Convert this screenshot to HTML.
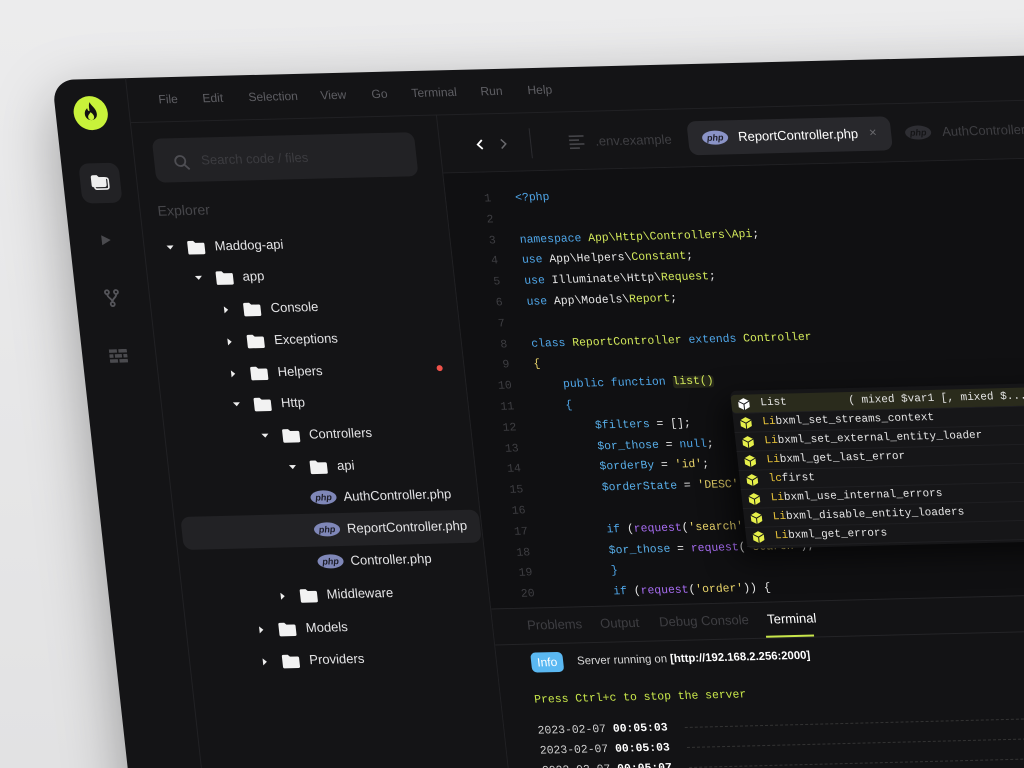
<!DOCTYPE html>
<html><head><meta charset="utf-8"><style>
*{margin:0;padding:0;box-sizing:border-box}
html,body{width:1024px;height:768px;overflow:hidden}
body{background:linear-gradient(180deg,#ececed 0%,#e2e2e3 100%);font-family:"Liberation Sans",sans-serif;position:relative}
.win{position:absolute;left:0;top:0;width:1150px;height:820px;background:#141416;border-radius:22px;transform-origin:0 0;transform:matrix(1,-0.025,0.11,1,52,80);box-shadow:0 20px 60px rgba(0,0,0,.35);overflow:hidden}
.a{position:absolute;white-space:nowrap}
.mono{font-family:"Liberation Mono",monospace}
.menu{font-size:12px;color:#5e5e63;top:15px}
.tree{font-size:13px;color:#e4e4e6;line-height:16px}
.code{font-family:"Liberation Mono",monospace;font-size:11.4px;line-height:20.8px;color:#e6e6e6;white-space:pre}
.ln{color:#3e3e42;text-align:right;width:30px;left:395px}
.k{color:#4fa6e8}.t{color:#d2e85a}.s{color:#e8d36a}.p{color:#a66cf0}.v{color:#58aee8}
.php{position:absolute;width:26px;height:14px;border-radius:50%;background:#7f87b8;color:#1b1b25;font:bold italic 9px/14px "Liberation Sans",sans-serif;text-align:center}
.row{position:absolute;left:0;right:0;height:19px;border-bottom:1px solid #1f1f22}
.row .ic{position:absolute;left:6px;top:3px}
.row .tx{position:absolute;left:29px;top:1px;font-family:"Liberation Mono",monospace;font-size:11px;line-height:17px;color:#e4e4e4;white-space:pre}
.y{color:#e8c43a}
</style></head><body>
<div class="win">
  <div class="a" style="left:73px;top:0;width:1px;height:820px;background:#212124"></div>
  <div class="a" style="left:74px;top:44px;width:1100px;height:1px;background:#212124"></div>
  <div class="a" style="left:18px;top:17px;width:34px;height:34px;border-radius:50%;background:#c8f23a"></div>
  <svg class="a" style="left:18px;top:17px" width="34" height="34" viewBox="0 0 34 34"><path d="M17 6c1 4 6 6 6 12a6 6 0 0 1-12 0c0-3 1.5-5 3-6 0 2 1 3 2 3 0-4-0.5-6 1-9z" fill="#111"/><path d="M17 16c2 2 3 3 3 5a3 3 0 0 1-6 0c0-2 1.5-3 3-5z" fill="#c8f23a"/></svg>
  <div class="a" style="left:17px;top:84px;width:40px;height:40px;border-radius:10px;background:#222225"></div>
  <svg class="a" style="left:26px;top:94px" width="22" height="20" viewBox="0 0 22 20"><rect x="5" y="5" width="14" height="11" rx="2" fill="none" stroke="#eee" stroke-width="1.6"/><path d="M2 4a2 2 0 0 1 2-2h4l2 2h5a2 2 0 0 1 2 2v6a2 2 0 0 1-2 2H4a2 2 0 0 1-2-2z" fill="#eee"/></svg>
  <svg class="a" style="left:30px;top:155px" width="12" height="12" viewBox="0 0 12 12"><path d="M2 1l9 5-9 5z" fill="#4a4a4e"/></svg>
  <svg class="a" style="left:28px;top:210px" width="16" height="18" viewBox="0 0 16 18"><g fill="none" stroke="#55555a" stroke-width="1.8"><circle cx="3.5" cy="3" r="2"/><circle cx="12.5" cy="3" r="2"/><circle cx="8" cy="15" r="2"/><path d="M3.5 5c0 4 4.5 4 4.5 8M12.5 5c0 4-4.5 4-4.5 8"/></g></svg>
  <svg class="a" style="left:27px;top:270px" width="18" height="14" viewBox="0 0 18 14"><g fill="#4a4a4e"><rect x="0" y="0" width="8" height="3.5"/><rect x="9.5" y="0" width="8.5" height="3.5"/><rect x="0" y="5" width="4" height="3.5"/><rect x="5.5" y="5" width="7" height="3.5"/><rect x="14" y="5" width="4" height="3.5"/><rect x="0" y="10" width="8" height="3.5"/><rect x="9.5" y="10" width="8.5" height="3.5"/></g></svg>
  <div class="a menu" style="left:104px">File</div>
  <div class="a menu" style="left:148px">Edit</div>
  <div class="a menu" style="left:194px">Selection</div>
  <div class="a menu" style="left:266px">View</div>
  <div class="a menu" style="left:317px">Go</div>
  <div class="a menu" style="left:357px">Terminal</div>
  <div class="a menu" style="left:426px">Run</div>
  <div class="a menu" style="left:473px">Help</div>
  <div class="a" style="left:379px;top:45px;width:1px;height:800px;background:#212124"></div>
  <div class="a" style="left:93px;top:61px;width:262px;height:44px;border-radius:9px;background:#222225"></div>
  <svg class="a" style="left:112px;top:77px" width="17" height="17" viewBox="0 0 17 17"><circle cx="7" cy="7" r="5" fill="none" stroke="#4e4e53" stroke-width="1.8"/><path d="M11 11l4.5 4.5" stroke="#4e4e53" stroke-width="1.8"/></svg>
  <div class="a" style="left:140px;top:76px;font-size:13px;color:#3c3c40">Search code / files</div>
  <div class="a" style="left:91px;top:125px;font-size:14px;color:#46464a">Explorer</div>
  <div class="a" style="left:80px;top:439px;width:298px;height:33px;border-radius:9px;background:#222225"></div>
  <div id="tree"></div>
  <div class="a" style="left:352px;top:294px;width:6px;height:6px;border-radius:50%;background:#f0524a"></div>
  <div class="a" style="left:380px;top:102px;width:800px;height:1px;background:#212124"></div>
  <svg class="a" style="left:415px;top:69px" width="10" height="12" viewBox="0 0 10 12"><path d="M7 1.5L2.5 6 7 10.5" fill="none" stroke="#fff" stroke-width="1.8"/></svg>
  <svg class="a" style="left:438px;top:69px" width="10" height="12" viewBox="0 0 10 12"><path d="M3 1.5L7.5 6 3 10.5" fill="none" stroke="#6a6a6e" stroke-width="1.5"/></svg>
  <div class="a" style="left:470px;top:60px;width:1px;height:30px;background:#2c2c30"></div>
  <svg class="a" style="left:509px;top:68px" width="15" height="14" viewBox="0 0 15 14"><g stroke="#444448" stroke-width="1.6"><path d="M0 1h15M0 5h10M0 9h15M0 13h10"/></g></svg>
  <div class="a" style="left:535px;top:67px;font-size:13px;color:#3e3e42">.env.example</div>
  <div class="a" style="left:628px;top:57px;width:203px;height:34px;border-radius:9px;background:#28282c"></div>
  <div class="php" style="left:642px;top:67px;background:#8a93c6">php</div>
  <div class="a" style="left:678px;top:66px;font-size:13px;color:#fff">ReportController.php</div>
  <div class="a" style="left:809px;top:65px;font-size:13px;color:#6a6a6e">×</div>
  <div class="php" style="left:845px;top:67px;background:#2e2e33;color:#141416">php</div>
  <div class="a" style="left:882px;top:66px;font-size:13px;color:#3e3e42">AuthController.php</div>
  <div class="a" style="left:380px;top:103px;width:800px;height:435px;background:#101012"></div>
  <div class="a code ln" style="top:120px">1
2
3
4
5
6
7
8
9
10
11
12
13
14
15
16
17
18
19
20</div>
  <div class="a code" style="left:449px;top:120px"><span class="k">&lt;?php</span>

<span class="k">namespace</span> <span class="t">App\Http\Controllers\Api</span>;
<span class="k">use</span> App\Helpers\<span class="t">Constant</span>;
<span class="k">use</span> Illuminate\Http\<span class="t">Request</span>;
<span class="k">use</span> App\Models\<span class="t">Report</span>;

<span class="k">class</span> <span class="t">ReportController</span> <span class="k">extends</span> <span class="t">Controller</span>
<span class="s">{</span>
    <span class="k">public function</span> <span class="t" style="background:#26271a;border-radius:3px">list()</span>
    <span class="k">{</span>
        <span class="v">$filters</span> = [];
        <span class="v">$or_those</span> = <span class="k">null</span>;
        <span class="v">$orderBy</span> = <span class="s">'id'</span>;
        <span class="v">$orderState</span> = <span class="s">'DESC'</span>;

        <span class="k">if</span> (<span class="p">request</span>(<span class="s">'search'</span>)) {
        <span class="v">$or_those</span> = <span class="p">request</span>(<span class="s">'search'</span>);
        <span class="k">}</span>
        <span class="k">if</span> (<span class="p">request</span>(<span class="s">'order'</span>)) {</div>
  <div class="a" style="left:642px;top:327px;width:500px;height:158px;background:#161618;border-radius:6px;box-shadow:-10px 10px 30px rgba(0,0,0,.6)" id="pop"></div>
  <div class="a" style="left:380px;top:538px;width:800px;height:300px;background:#131315;border-top:1px solid #242427"></div>
  <div class="a" style="left:380px;top:574px;width:800px;height:1px;background:#242427"></div>
  <div class="a" style="left:414px;top:548px;font-size:13px;color:#3e3e42">Problems</div>
  <div class="a" style="left:487px;top:548px;font-size:13px;color:#3e3e42">Output</div>
  <div class="a" style="left:546px;top:548px;font-size:13px;color:#3e3e42">Debug Console</div>
  <div class="a" style="left:654px;top:548px;font-size:13px;color:#fff">Terminal</div>
  <div class="a" style="left:651px;top:572px;width:48px;height:2px;background:#c8e64a"></div>
  <div class="a" style="left:414px;top:583px;width:32px;height:20px;border-radius:5px;background:#5ab8f2;color:#fff;font-size:12px;line-height:20px;text-align:center">Info</div>
  <div class="a" style="left:460px;top:587px;font-size:11.3px;color:#d8d8d8">Server running on <b style="color:#fff">[http://192.168.2.256:2000]</b></div>
  <div class="a mono" style="left:413px;top:625px;font-size:11.4px;color:#c8e64a">Press Ctrl+c to stop the server</div>
  <div class="a mono" style="left:413px;top:652px;font-size:11.4px;line-height:20px;color:#cfcfcf;white-space:pre">2023-02-07 <b style="color:#fff">00:05:03</b>
2023-02-07 <b style="color:#fff">00:05:03</b>
2023-02-07 <b style="color:#fff">00:05:07</b></div>
  <div class="a" style="left:560px;top:661px;width:600px;border-top:1px dashed #333"></div>
  <div class="a" style="left:560px;top:681px;width:600px;border-top:1px dashed #333"></div>
  <div class="a" style="left:560px;top:701px;width:600px;border-top:1px dashed #333"></div>
</div>
<script>
var items=[[0,'o','Maddog-api',170],[1,'o','app',201],[2,'c','Console',233],[2,'c','Exceptions',265],[2,'c','Helpers',297],[2,'o','Http',328],[3,'o','Controllers',360],[4,'o','api',392],[5,'p','AuthController.php',423],[5,'p','ReportController.php',455],[5,'p','Controller.php',487],[3,'c','Middleware',520],[2,'c','Models',553],[2,'c','Providers',585]];
var h='';
items.forEach(function(it){var ax=100+24.5*it[0],y=it[3];
if(it[1]=='p'){h+='<div class="php" style="left:212px;top:'+(y-7)+'px">php</div><div class="a tree" style="left:245px;top:'+(y-8)+'px">'+it[2]+'</div>';return;}
var tri=it[1]=='o'?'<path d="M0 1h7L3.5 5z" fill="#eee"/>':'<path d="M1.5 0v7L5.5 3.5z" fill="#eee"/>';
h+='<svg class="a" style="left:'+(ax-4)+'px;top:'+(y-3)+'px" width="8" height="8" viewBox="0 0 8 8">'+tri+'</svg>';
h+='<svg class="a" style="left:'+(ax+16)+'px;top:'+(y-7)+'px" width="19" height="15" viewBox="0 0 19 15"><path d="M1 2.5a1.5 1.5 0 0 1 1.5-1.5h4.5l2 2h7.5a1.5 1.5 0 0 1 1.5 1.5v8.5a1.5 1.5 0 0 1-1.5 1.5h-14a1.5 1.5 0 0 1-1.5-1.5z" fill="#f2f2f2"/></svg>';
h+='<div class="a tree" style="left:'+(ax+44)+'px;top:'+(y-8)+'px">'+it[2]+'</div>';});
document.getElementById('tree').outerHTML=h;
var rows=['List','Libxml_set_streams_context','Libxml_set_external_entity_loader','Libxml_get_last_error','lcfirst','Libxml_use_internal_errors','Libxml_disable_entity_loaders','Libxml_get_errors'];
var p='';rows.forEach(function(r,i){var col=i==0?'#fff':'#e5ef4a';
var cube='<svg class="ic" width="13" height="13" viewBox="0 0 13 13"><path d="M6.5 0.5l5.5 3v6l-5.5 3-5.5-3v-6z" fill="'+col+'"/><path d="M1 3.5l5.5 3 5.5-3M6.5 6.5v6" fill="none" stroke="#161618" stroke-width="1"/></svg>';
var tx=i==0?'List':'<span class="y">'+r.slice(0,2)+'</span>'+r.slice(2);
p+='<div class="row" style="top:'+(4+i*19)+'px;'+(i==0?'background:#2a2b1c;border-radius:4px;':'')+'">'+cube+'<div class="tx">'+tx+'</div>'+(i==0?'<div class="tx" style="left:117px">( mixed $var1 [, mixed $... ]):</div>':'')+'</div>';});
document.getElementById('pop').innerHTML=p;
</script>
</body></html>
